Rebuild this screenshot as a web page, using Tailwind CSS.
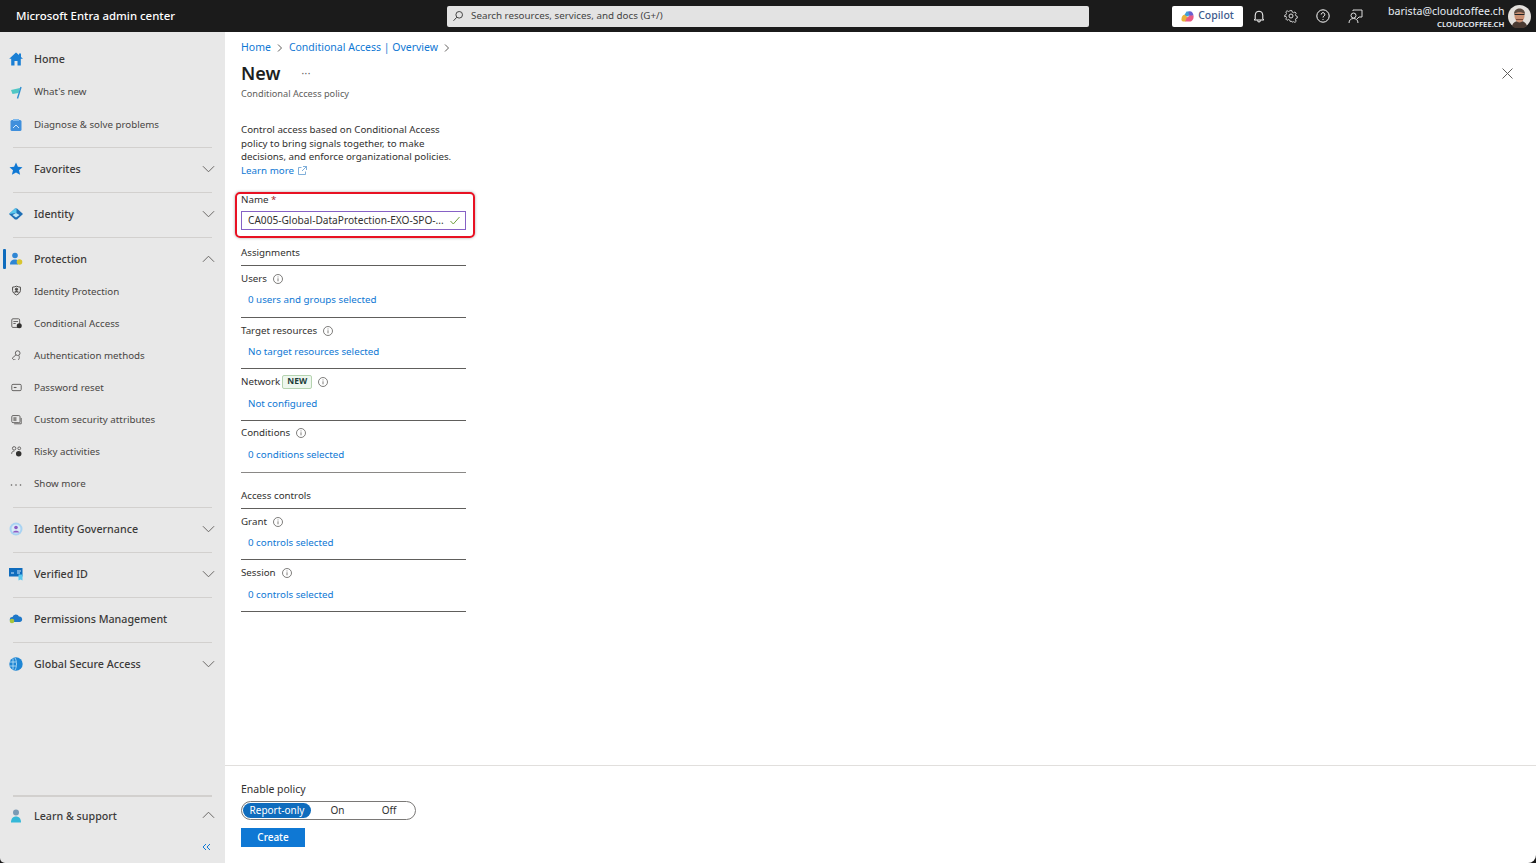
<!DOCTYPE html>
<html lang="en">
<head>
<meta charset="UTF-8">
<title>New - Microsoft Entra admin center</title>
<script src="https://cdn.jsdelivr.net/npm/@tailwindcss/browser@4"></script>
</head>
<body class="h-[863px] w-[1536px] overflow-hidden bg-[#1b1b1b] font-['Noto_Sans',sans-serif] text-[9.75px] text-[#323130]">

<!-- top bar -->
<header class="flex h-8 items-center bg-[#1b1b1b] text-white">
  <div class="w-[447px] pl-4 text-[11.4px] font-medium">Microsoft Entra admin center</div>
  <div class="flex h-[21px] w-[642px] items-center gap-[7px] rounded-[2px] bg-[#e3e3e3] pl-[5px] text-[9.8px] text-[#444]">
    <svg class="h-3 w-3" viewBox="0 0 12 12" fill="none" stroke="#444"><circle cx="7.2" cy="4.8" r="3.3"/><path d="M4.8 7.2 1.5 10.8"/></svg>
    <span class="pt-[1px]">Search resources, services, and docs (G+/)</span>
  </div>
  <div class="ml-[83px] flex h-[21px] w-[71px] items-center justify-center gap-[4px] rounded-[2px] bg-white text-[10.5px] font-medium text-[#3d5a8c]">
    <svg class="h-[13px] w-[13px]" viewBox="0 0 14 14"><path d="M3 6.500 6 1.500h4.500L8 7z" fill="#3f9fd8"/><path d="M8 1.500h2.500c1.500 0 2.500 2 3 4.500L9 7z" fill="#6a5fd0"/><path d="M.5 10c0-3 1.500-5 3.500-5l3.500 3L5 12.500H3C1.500 12.500.5 12 .5 10z" fill="#e8b23a"/><path d="M6 8.500 9.500 6h4c.5 3-1 6.500-4 6.500H4.500z" fill="#ea5b83"/></svg>
    <span>Copilot</span>
  </div>
  <div class="flex items-center">
    <span class="flex w-8 justify-center"><svg class="h-[14px] w-[14px]" viewBox="0 0 14 14" fill="none" stroke="#fff"><path d="M3.200 10V6a3.800 3.800 0 0 1 7.600 0v4l1 1H2.200zM5.500 11.500a1.500 1.500 0 0 0 3 0"/></svg></span>
    <span class="flex w-8 justify-center"><svg class="h-[14px] w-[14px]" viewBox="0 0 14 14" fill="none" stroke="#ddd"><circle cx="7" cy="7" r="2"/><path d="M6 1h2l.4 1.700 1.500.7 1.500-.9 1.400 1.400-.9 1.500.6 1.500 1.500.6v1.800l-1.500.5-.6 1.500.9 1.500-1.400 1.400-1.500-.9-1.500.6L8 13H6l-.4-1.500-1.500-.6-1.500.9-1.400-1.400.9-1.500-.6-1.500L0 7.900V6.100l1.500-.6.600-1.500-.9-1.500 1.400-1.400 1.500.9 1.500-.7z" transform="translate(.7 .7) scale(.9)"/></svg></span>
    <span class="flex w-8 justify-center"><svg class="h-[14px] w-[14px]" viewBox="0 0 14 14" fill="none" stroke="#fff"><circle cx="7" cy="7" r="6.200"/><path d="M5.200 5.500a1.800 1.800 0 1 1 2.800 1.500c-.7.500-1 .8-1 1.500"/><path d="M7 10v.9"/></svg></span>
    <span class="flex w-8 justify-center"><svg class="h-[15px] w-[15px]" viewBox="0 0 15 15" fill="none" stroke="#ddd"><circle cx="5.500" cy="6.500" r="2.500"/><path d="M1 14c0-3 2-4.500 4.500-4.500S10 11 10 14M5 2V1h9v7h-3l-2 2"/></svg></span>
  </div>
  <div class="ml-[17px] flex flex-col items-end pt-[4px] leading-[13px]">
    <span class="text-[10.6px] text-[#e8eef5]">barista@cloudcoffee.ch</span>
    <span class="text-[7.8px] font-semibold text-[#e8eef5]">CLOUDCOFFEE.CH</span>
  </div>
  <svg class="ml-[4px] h-[23px] w-[23px]" viewBox="0 0 23 23">
    <circle cx="11.500" cy="11.500" r="11.500" fill="#e4e0dc"/>
    <path d="M4 21c1-4 4-5 7.500-5s6.500 1 7.500 5a11.500 11.500 0 0 1-15 0z" fill="#4a3a32"/>
    <ellipse cx="11.500" cy="11" rx="5" ry="6.500" fill="#c98f72"/>
    <path d="M6 9c0-4 3-5.500 5.500-5.500S17 5 17 9c-3-2.500-8-2.500-11 0z" fill="#5c4a40"/>
    <path d="M6.500 9.500h10" stroke="#222"/>
    <path d="M8 14.500h7" stroke="#7a4a3a"/>
  </svg>
</header>

<div class="flex h-[831px]">
  <!-- left nav -->
  <nav class="flex w-[225px] shrink-0 flex-col rounded-bl-[5px] bg-[#e8e8e8] pt-[11px] text-[#484644]">
    <a class="flex h-[32.3px] items-center pl-[9px] text-[10.7px] font-medium text-[#3b3a39]">
      <svg class="mr-[11px] h-[14px] w-[14px]" viewBox="0 0 14 14"><path d="M7 .5 .2 6.800h2V13.500h3.300V9h3v4.500h3.300V6.800h2.200L12 5V1.500h-2V3z" fill="#1a7fd4"/></svg>Home
    </a>
    <a class="flex h-[33px] items-center pl-[9px] pt-[2px]">
      <svg class="mr-[11px] h-[14px] w-[14px]" viewBox="0 0 14 14"><path d="M2 4 11 2 9.500 7 3.500 8z" fill="#4fc7c4"/><path d="M8.500 12.500 12 1" stroke="#2f8fd0" stroke-width="1.400"/></svg>What's new
    </a>
    <a class="flex h-8 items-center pl-[9px] pt-[2px]">
      <svg class="mr-[11px] h-[14px] w-[14px]" viewBox="0 0 14 14"><rect x="1.500" y="2" width="11" height="11" rx="1.500" fill="#3f8fdc"/><path d="M4 3V1h6v2z" fill="#7db8ec"/><path d="M4 10l3-3 3 3" stroke="#cfe6fa" fill="none"/></svg>Diagnose &amp; solve problems
    </a>

    <div class="mx-[13px] mt-[6.600px] h-px bg-[#d2d0ce]"></div>
    <a class="flex h-[44px] items-center pb-[2px] pl-[9px] pr-[10px] text-[10.7px] font-medium text-[#3b3a39]">
      <svg class="mr-[11px] h-[14px] w-[14px]" viewBox="0 0 14 14"><path d="m7 .5 1.900 4.300 4.600.4-3.500 3 1.100 4.600L7 10.400l-4.100 2.400L4 8.200.5 5.200l4.600-.4z" fill="#0f78d4"/></svg>Favorites
      <svg class="ml-auto h-[8px] w-[13px]" viewBox="0 0 14 8" fill="none" stroke="#605e5c"><path d="m1 1 6 6 6-6"/></svg>
    </a>
    <div class="mx-[13px] h-px bg-[#d2d0ce]"></div>
    <a class="flex h-[44px] items-center pb-[2px] pl-[9px] pr-[10px] text-[10.7px] font-medium text-[#3b3a39]">
      <svg class="mr-[11px] h-[14px] w-[14px]" viewBox="0 0 14 14"><path d="M0 7 6 1.500h2L14 7l-6 5.500H6z" fill="#1f6fb5"/><path d="M0 7 6 1.500h1.500V6z" fill="#5ac8ee"/><path d="M3.500 8 7 6l3.500 2L7 10.500z" fill="#bfe7f7"/></svg>Identity
      <svg class="ml-auto h-[8px] w-[13px]" viewBox="0 0 14 8" fill="none" stroke="#605e5c"><path d="m1 1 6 6 6-6"/></svg>
    </a>
    <div class="mx-[13px] h-px bg-[#d2d0ce]"></div>
    <a class="relative flex h-[44px] items-center pb-[2px] pl-[9px] pr-[10px] text-[10.7px] font-medium text-[#3b3a39]">
      <span class="absolute left-[3px] top-[11px] h-[20px] w-[3px] rounded-[1px] bg-[#0f6cbd]"></span>
      <svg class="mr-[11px] h-[14px] w-[14px]" viewBox="0 0 14 14"><circle cx="6" cy="3.500" r="2.800" fill="#2f86d4"/><path d="M1 12.500c0-3.500 2-5 5-5s3 1 3 5z" fill="#2f86d4"/><circle cx="10.500" cy="10" r="2.800" fill="#d8c52f"/></svg>Protection
      <svg class="ml-auto h-[8px] w-[13px]" viewBox="0 0 14 8" fill="none" stroke="#605e5c"><path d="m1 7 6-6 6 6"/></svg>
    </a>
    <div class="-mt-[6px] flex flex-col">
      <a class="flex h-[32.1px] items-center pl-[9px]">
        <svg class="mb-[2px] ml-[1.500px] mr-[12.500px] h-[11px] w-[11px]" viewBox="0 0 14 14" fill="none" stroke="#484644" stroke-width="1.200"><path d="M7 1.500c2 1 3.500 1 5 1.200v4c0 3-2.500 5-5 6-2.500-1-5-3-5-6v-4c1.500-.2 3-.2 5-1.200z"/><circle cx="7" cy="5.500" r="1.500" fill="#484644"/><path d="M4.500 9.500c1-1.500 4-1.500 5 0" stroke-width="1.500"/></svg>Identity Protection
      </a>
      <a class="flex h-[32.1px] items-center pl-[9px]">
        <svg class="mb-[2px] ml-[1.500px] mr-[12.500px] h-[11px] w-[11px]" viewBox="0 0 14 14" fill="none" stroke="#605e5c" stroke-width="1.200"><rect x="1" y="1" width="10" height="11" rx="1.500"/><path d="M3 4.500h6M3 7h3"/><circle cx="10.500" cy="10" r="3.200" fill="#323130" stroke="none"/></svg>Conditional Access
      </a>
      <a class="flex h-[32.1px] items-center pl-[9px]">
        <svg class="mb-[2px] ml-[1.500px] mr-[12.500px] h-[11px] w-[11px]" viewBox="0 0 14 14" fill="none" stroke="#605e5c" stroke-width="1.200"><circle cx="8.500" cy="4" r="3"/><path d="M6.500 6 1.500 10.500l2 2 1-1 .8.8M10 7c.8 2 1 3-.5 5.500"/></svg>Authentication methods
      </a>
      <a class="flex h-[32.1px] items-center pl-[9px]">
        <svg class="mb-[2px] ml-[1.500px] mr-[12.500px] h-[11px] w-[11px]" viewBox="0 0 14 14" fill="none" stroke="#605e5c" stroke-width="1.200"><rect x="1" y="3" width="12" height="8" rx="1.500"/><path d="M3.500 7h3.500" stroke-width="1.400"/></svg>Password reset
      </a>
      <a class="flex h-[32.1px] items-center pl-[9px]">
        <svg class="mb-[2px] ml-[1.500px] mr-[12.500px] h-[11px] w-[11px]" viewBox="0 0 14 14" fill="none" stroke="#605e5c" stroke-width="1.200"><rect x="1" y="2" width="10.500" height="9" rx="1.500"/><rect x="3" y="4" width="4" height="5" fill="#8a8886" stroke="none"/><path d="M13 5v7.500H4"/></svg>Custom security attributes
      </a>
      <a class="flex h-[32.1px] items-center pl-[9px]">
        <svg class="mb-[2px] ml-[1.500px] mr-[12.500px] h-[11px] w-[11px]" viewBox="0 0 14 14" fill="none" stroke="#605e5c" stroke-width="1.200"><circle cx="4" cy="3" r="2.200"/><circle cx="10.500" cy="3" r="1.800"/><path d="M.8 10c0-2.500 1.500-3.500 3.500-3.500"/><circle cx="9.800" cy="10" r="3.500" fill="#323130" stroke="none"/></svg>Risky activities
      </a>
      <a class="flex h-[32.1px] items-center pl-[9px]">
        <svg class="mr-[11px] h-[14px] w-[14px]" viewBox="0 0 14 14" fill="#605e5c"><circle cx="2.500" cy="7" r=".8"/><circle cx="7" cy="7" r=".8"/><circle cx="11.500" cy="7" r=".8"/></svg>Show more
      </a>
    </div>

    <div class="mx-[13px] mt-[6px] h-px bg-[#d2d0ce]"></div>
    <a class="flex h-[44px] items-center pb-[2px] pl-[9px] pr-[10px] text-[10.7px] font-medium text-[#3b3a39]">
      <svg class="mr-[11px] h-[14px] w-[14px]" viewBox="0 0 14 14"><circle cx="7" cy="7" r="6.500" fill="#a9d3f2"/><circle cx="7" cy="7" r="4.500" fill="#dbeaf7"/><circle cx="7" cy="5.500" r="1.800" fill="#8a5bc4"/><path d="M3.800 10.500c.5-2.500 5.900-2.500 6.400 0z" fill="#8a5bc4"/></svg>Identity Governance
      <svg class="ml-auto h-[8px] w-[13px]" viewBox="0 0 14 8" fill="none" stroke="#605e5c"><path d="m1 1 6 6 6-6"/></svg>
    </a>
    <div class="mx-[13px] h-px bg-[#d2d0ce]"></div>
    <a class="flex h-[44px] items-center pb-[2px] pl-[9px] pr-[10px] text-[10.7px] font-medium text-[#3b3a39]">
      <svg class="mr-[11px] h-[14px] w-[14px]" viewBox="0 0 14 14"><rect y="1" width="13.500" height="8.500" fill="#0f6cbd"/><path d="M2 6h3M8 4h4M8 6h3" stroke="#cfe6fa"/><path d="M9.500 7.500h4V13.500l-2-1-2 1z" fill="#5ac8ee"/></svg>Verified ID
      <svg class="ml-auto h-[8px] w-[13px]" viewBox="0 0 14 8" fill="none" stroke="#605e5c"><path d="m1 1 6 6 6-6"/></svg>
    </a>
    <div class="mx-[13px] h-px bg-[#d2d0ce]"></div>
    <a class="flex h-[44px] items-center pb-[2px] pl-[9px] pr-[10px] text-[10.7px] font-medium text-[#3b3a39]">
      <svg class="mr-[11px] h-[14px] w-[14px]" viewBox="0 0 14 14"><path d="M3 10a2.500 2.500 0 0 1 .5-5A3.500 3.500 0 0 1 10 4.500a2.800 2.800 0 0 1 1 5.500z" fill="#1f78c8"/><circle cx="3" cy="9" r="2.300" fill="#a9c53a"/></svg>Permissions Management
    </a>
    <div class="mx-[13px] h-px bg-[#d2d0ce]"></div>
    <a class="flex h-[44px] items-center pb-[2px] pl-[9px] pr-[10px] text-[10.7px] font-medium text-[#3b3a39]">
      <svg class="mr-[11px] h-[14px] w-[14px]" viewBox="0 0 14 14"><circle cx="7" cy="7" r="6.700" fill="#1f86d4"/><path d="M4 1.500v11M1 5h6M1 9h6M6 1c2 3 2 9 0 12" stroke="#bfe3f7" fill="none" stroke-width=".8"/></svg>Global Secure Access
      <svg class="ml-auto h-[8px] w-[13px]" viewBox="0 0 14 8" fill="none" stroke="#605e5c"><path d="m1 1 6 6 6-6"/></svg>
    </a>

    <div class="mx-[13px] mt-auto h-[2px] bg-[#d2d0ce]"></div>
    <a class="flex h-[38px] items-center pl-[9px] pr-[10px] text-[10.7px] font-medium text-[#3b3a39]">
      <svg class="mr-[11px] h-[14px] w-[14px]" viewBox="0 0 14 14"><circle cx="7" cy="3.500" r="3" fill="#7a9bb5"/><path d="M2 13.500c0-4 2-6 5-6s5 2 5 6z" fill="#35b8d8"/></svg>Learn &amp; support
      <svg class="mb-[2px] ml-auto h-[8px] w-[13px]" viewBox="0 0 14 8" fill="none" stroke="#605e5c"><path d="m1 7 6-6 6 6"/></svg>
    </a>
    <div class="flex h-[28px] items-start justify-end pr-[14px] pt-[8px]">
      <svg class="h-[8px] w-[9px]" viewBox="0 0 9 8" fill="none" stroke="#0f78d4"><path d="M4 1 1 4l3 3M8 1 5 4l3 3"/></svg>
    </div>
  </nav>

  <!-- page -->
  <main class="flex min-w-0 flex-1 flex-col rounded-br-[8px] bg-white">
    <div class="relative flex-1 pl-4">
      <div class="flex h-[30px] items-center pt-[2px] text-[10.5px] text-[#0f78d4]">
        <span>Home</span>
        <svg class="mx-[6px] h-2 w-[6px]" viewBox="0 0 6 8" fill="none" stroke="#605e5c"><path d="m1 .5 3.500 3.500L1 7.500"/></svg>
        <span>Conditional Access | Overview</span>
        <svg class="mx-[6px] h-2 w-[6px]" viewBox="0 0 6 8" fill="none" stroke="#605e5c"><path d="m1 .5 3.500 3.500L1 7.500"/></svg>
      </div>
      <div class="flex h-[23px] items-center">
        <h1 class="text-[18px] font-semibold text-[#201f1e]">New</h1>
        <span class="ml-[21px] text-[10px] tracking-[0.5px] text-[#605e5c]">···</span>
      </div>
      <p class="mt-[2px] text-[9.2px] leading-[14px] text-[#605e5c]">Conditional Access policy</p>
      <button class="absolute right-[23px] top-[36px]" aria-label="Close">
        <svg class="block h-[11px] w-[11px]" viewBox="0 0 11 11" stroke="#605e5c"><path d="m.5.500 10 10M10.500.500l-10 10"/></svg>
      </button>

      <div class="w-[225px]">
        <p class="mt-[22px] whitespace-nowrap leading-[13.7px]">Control access based on Conditional Access<br>policy to bring signals together, to make<br>decisions, and enforce organizational policies.<br>
          <span class="inline-flex items-center gap-[4px] text-[#0f78d4]">Learn more
            <svg class="h-[9px] w-[9px]" viewBox="0 0 9 9" fill="none" stroke="#5f9bd0" stroke-width=".8"><path d="M3.500 1.500h-3v7h7v-3M5 .5h3.500V4M8.500.5 4 5"/></svg>
          </span>
        </p>

        <div class="-ml-[6px] -mr-[9px] mt-[14px] h-[46px] rounded-[5px] border-2 border-[#e81123] pl-[4px] pr-[7px] shadow-[0_0_3px_rgba(0,0,0,0.35)]">
          <label class="block h-[17px] leading-[12px]">Name <span class="text-[#a4262c]">*</span></label>
          <div class="flex h-[19px] items-center border border-[#8661c5] pl-[6px] pr-[5px] text-[10.15px]">
            <span class="whitespace-nowrap text-[#323130]">CA005-Global-DataProtection-EXO-SPO-...</span>
            <svg class="ml-auto h-[9px] w-[10px]" viewBox="0 0 10 9" fill="none" stroke="#6f9e3f"><path d="m.5 5 2.800 3L9.500 1"/></svg>
          </div>
        </div>

        <h2 class="mt-[7px] h-[20px] leading-[16px]">Assignments</h2>
        <div class="h-px bg-[#605e5c]"></div>

        <div class="h-[51px] pt-[6px]">
          <div class="flex h-[14px] items-center">Users
            <svg class="ml-[6px] h-[10px] w-[10px]" viewBox="0 0 10 10" fill="none" stroke="#605e5c" stroke-width=".8"><circle cx="5" cy="5" r="4.500"/><path d="M5 4.300v3M5 2.500v.9"/></svg>
          </div>
          <a class="mt-[7px] block pl-[7px] leading-[14px] text-[#0f78d4]">0 users and groups selected</a>
        </div>
        <div class="h-px bg-[#605e5c]"></div>
        <div class="h-[50px] pt-[6px]">
          <div class="flex h-[14px] items-center">Target resources
            <svg class="ml-[6px] h-[10px] w-[10px]" viewBox="0 0 10 10" fill="none" stroke="#605e5c" stroke-width=".8"><circle cx="5" cy="5" r="4.500"/><path d="M5 4.300v3M5 2.500v.9"/></svg>
          </div>
          <a class="mt-[7px] block pl-[7px] leading-[14px] text-[#0f78d4]">No target resources selected</a>
        </div>
        <div class="h-px bg-[#605e5c]"></div>
        <div class="h-[51px] pt-[6px]">
          <div class="flex h-[14px] items-center">Network
            <span class="ml-[2px] flex h-[14px] items-center rounded-[2px] border border-[#b5d3b0] bg-[#eef7ee] px-[4px] text-[8.5px] font-bold text-[#1f3d3a]">NEW</span>
            <svg class="ml-[6px] h-[10px] w-[10px]" viewBox="0 0 10 10" fill="none" stroke="#605e5c" stroke-width=".8"><circle cx="5" cy="5" r="4.500"/><path d="M5 4.300v3M5 2.500v.9"/></svg>
          </div>
          <a class="mt-[8px] block pl-[7px] leading-[14px] text-[#0f78d4]">Not configured</a>
        </div>
        <div class="h-px bg-[#605e5c]"></div>
        <div class="h-[51px] pt-[5px]">
          <div class="flex h-[14px] items-center">Conditions
            <svg class="ml-[6px] h-[10px] w-[10px]" viewBox="0 0 10 10" fill="none" stroke="#605e5c" stroke-width=".8"><circle cx="5" cy="5" r="4.500"/><path d="M5 4.300v3M5 2.500v.9"/></svg>
          </div>
          <a class="mt-[8px] block pl-[7px] leading-[14px] text-[#0f78d4]">0 conditions selected</a>
        </div>
        <div class="h-px bg-[#8a8886]"></div>

        <h2 class="mt-[15px] h-[20px] leading-[16px]">Access controls</h2>
        <div class="h-px bg-[#605e5c]"></div>
        <div class="h-[50px] pt-[6px]">
          <div class="flex h-[14px] items-center">Grant
            <svg class="ml-[6px] h-[10px] w-[10px]" viewBox="0 0 10 10" fill="none" stroke="#605e5c" stroke-width=".8"><circle cx="5" cy="5" r="4.500"/><path d="M5 4.300v3M5 2.500v.9"/></svg>
          </div>
          <a class="mt-[7px] block pl-[7px] leading-[14px] text-[#0f78d4]">0 controls selected</a>
        </div>
        <div class="h-px bg-[#605e5c]"></div>
        <div class="h-[51px] pt-[6px]">
          <div class="flex h-[14px] items-center">Session
            <svg class="ml-[6px] h-[10px] w-[10px]" viewBox="0 0 10 10" fill="none" stroke="#605e5c" stroke-width=".8"><circle cx="5" cy="5" r="4.500"/><path d="M5 4.300v3M5 2.500v.9"/></svg>
          </div>
          <a class="mt-[8px] block pl-[7px] leading-[14px] text-[#0f78d4]">0 controls selected</a>
        </div>
        <div class="h-px bg-[#605e5c]"></div>
      </div>
    </div>

    <!-- footer -->
    <footer class="h-[98px] border-t border-[#e1dfdd] pl-4 pt-[16px] text-[10.5px]">
      <div class="leading-[14px]">Enable policy</div>
      <div class="mt-[5px] flex h-[19px] w-[175px] items-center rounded-full border border-[#7a7876] px-[1px] text-[10px]">
        <span class="flex h-[15px] w-[68px] items-center justify-center rounded-full bg-[#0f6cbd] text-white">Report-only</span>
        <span class="w-[53px] text-center">On</span>
        <span class="w-[50px] text-center">Off</span>
      </div>
      <button class="mt-[8px] block h-[19px] w-[64px] bg-[#0f78d4] text-[10px] font-medium text-white">Create</button>
    </footer>
  </main>
</div>
</body>
</html>
